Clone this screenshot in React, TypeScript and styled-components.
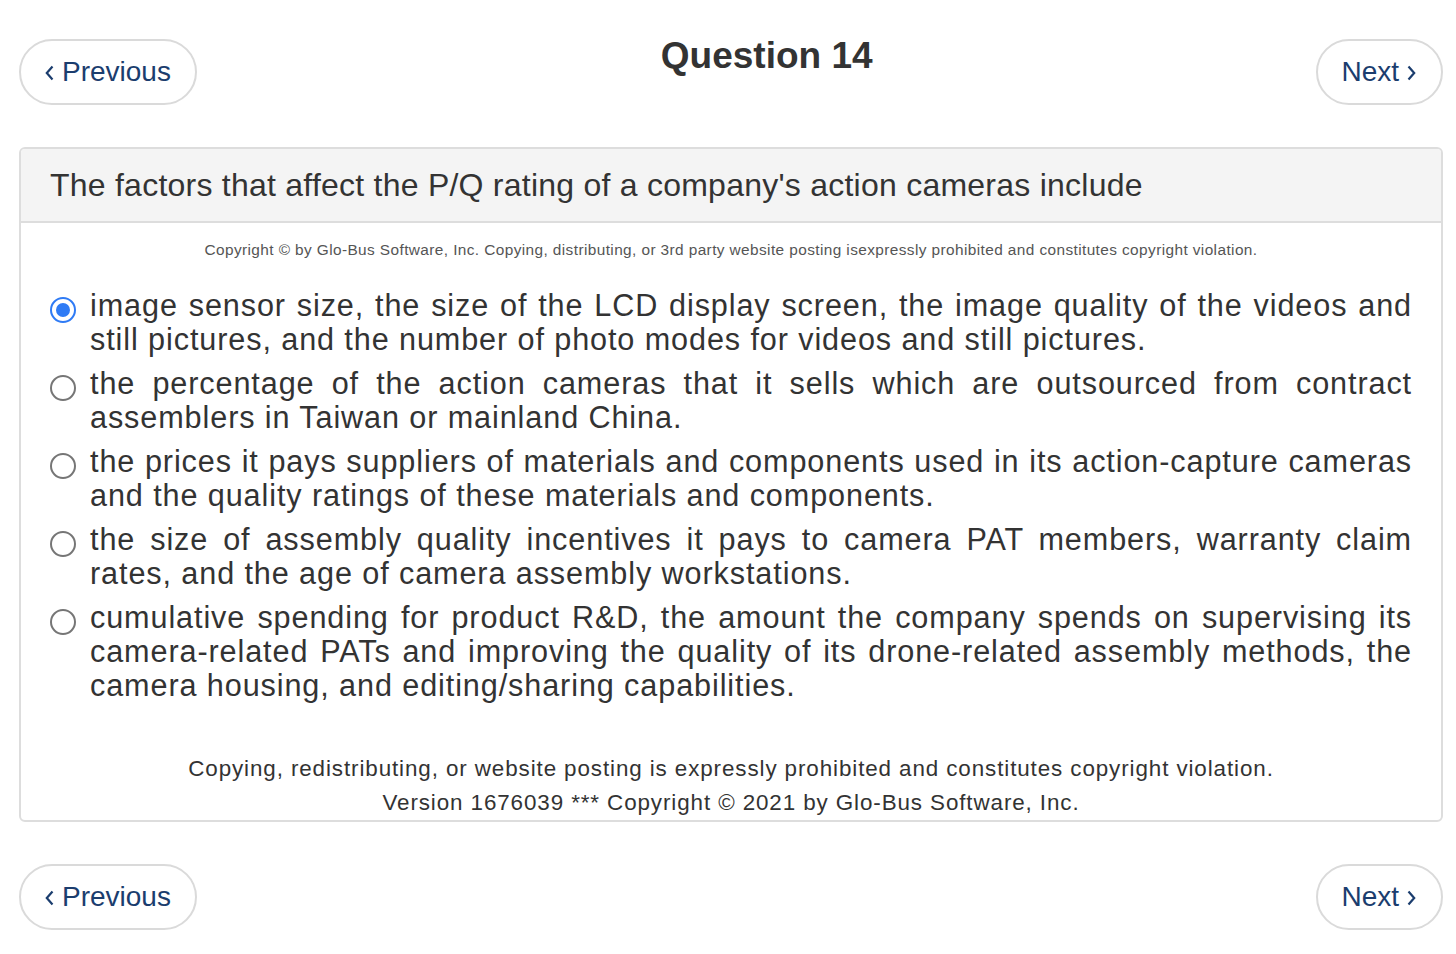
import React, { useState } from "react";
import styled, { createGlobalStyle } from "styled-components";

const GlobalStyle = createGlobalStyle`
  html, body {
    margin: 0;
    padding: 0;
    background: #fff;
    font-family: "Liberation Sans", Arial, Helvetica, sans-serif;
    color: #333;
  }
`;

const Page = styled.div`
  padding: 0 13px 0 19px;
`;

const NavRow = styled.div<{ $top: number }>`
  display: flex;
  justify-content: space-between;
  align-items: flex-start;
  padding-top: ${(p) => p.$top}px;
`;

const NavButton = styled.button<{ $offset: number }>`
  margin-top: ${(p) => p.$offset}px;
  height: 66px;
  padding: 0 24px 0 23px;
  border: 2px solid #dadada;
  border-radius: 33px;
  background: #fff;
  color: #1b3d6e;
  font-family: "Liberation Sans", Arial, Helvetica, sans-serif;
  font-size: 28px;
  display: flex;
  align-items: center;
  gap: 7px;
  cursor: pointer;
  svg {
    width: 11px;
    height: 18px;
    margin-top: 2px;
  }
`;

const Title = styled.h1`
  margin: 2px 0 0 20px;
  font-size: 37px;
  font-weight: bold;
  color: #333;
  line-height: 43px;
`;

const Panel = styled.div`
  margin: 42px 0;
  border: 2px solid #dddddd;
  border-radius: 6px;
  overflow: hidden;
`;

const PanelHeader = styled.div`
  background: #f4f4f4;
  border-bottom: 2px solid #dddddd;
  padding: 0 29px;
  height: 72px;
  display: flex;
  align-items: center;
  font-size: 32px;
  letter-spacing: 0.24px;
  color: #333;
`;

const PanelBody = styled.div`
  padding: 14px 29px 0;
`;

const SmallCopyright = styled.div`
  text-align: center;
  font-size: 15.4px;
  letter-spacing: 0.4px;
  color: #555;
  line-height: 26px;
  margin-bottom: 25px;
`;

const OptionList = styled.div`
  display: flex;
  flex-direction: column;
  gap: 10px;
`;

const OptionRow = styled.label`
  display: flex;
  align-items: flex-start;
  gap: 14px;
  cursor: pointer;
`;

const Radio = styled.span<{ $checked: boolean }>`
  flex: none;
  width: 26px;
  height: 26px;
  margin-top: 9px;
  box-sizing: border-box;
  border-radius: 50%;
  border: 2px solid ${(p) => (p.$checked ? "#2f7bf5" : "#767676")};
  background: #fff;
  display: flex;
  align-items: center;
  justify-content: center;
  &::after {
    content: "";
    width: 14px;
    height: 14px;
    border-radius: 50%;
    background: #2f7bf5;
    display: ${(p) => (p.$checked ? "block" : "none")};
  }
`;

const OptionText = styled.span`
  flex: 1;
  font-size: 30.6px;
  letter-spacing: 0.9px;
  line-height: 34px;
  text-align: justify;
  color: #333;
`;

const Footer = styled.div`
  text-align: center;
  font-size: 22.4px;
  letter-spacing: 0.9px;
  line-height: 34px;
  color: #333;
  margin-top: 50px;
`;

const ChevronLeft = () => (
  <svg viewBox="0 0 11 18" fill="none" stroke="currentColor" strokeWidth="2.2">
    <path d="M8.5 2.5 L2.8 9 L8.5 15.5" />
  </svg>
);

const ChevronRight = () => (
  <svg viewBox="0 0 11 18" fill="none" stroke="currentColor" strokeWidth="2.2">
    <path d="M2.5 2.5 L8.2 9 L2.5 15.5" />
  </svg>
);

const OPTIONS = [
  "image sensor size, the size of the LCD display screen, the image quality of the videos and still pictures, and the number of photo modes for videos and still pictures.",
  "the percentage of the action cameras that it sells which are outsourced from contract assemblers in Taiwan or mainland China.",
  "the prices it pays suppliers of materials and components used in its action-capture cameras and the quality ratings of these materials and components.",
  "the size of assembly quality incentives it pays to camera PAT members, warranty claim rates, and the age of camera assembly workstations.",
  "cumulative spending for product R&D, the amount the company spends on supervising its camera-related PATs and improving the quality of its drone-related assembly methods, the camera housing, and editing/sharing capabilities.",
];

const Nav = (props: { top: number; offset: number; title?: string }) => (
  <NavRow $top={props.top}>
    <NavButton $offset={props.offset}>
      <ChevronLeft />
      Previous
    </NavButton>
    {props.title && <Title>{props.title}</Title>}
    <NavButton $offset={props.offset}>
      Next
      <ChevronRight />
    </NavButton>
  </NavRow>
);

const App = () => {
  const [selected, setSelected] = useState(0);
  return (
    <Page>
      <GlobalStyle />
      <Nav top={32} offset={7} title="Question 14" />
      <Panel>
        <PanelHeader>
          The factors that affect the P/Q rating of a company's action cameras include
        </PanelHeader>
        <PanelBody>
          <SmallCopyright>
            Copyright © by Glo-Bus Software, Inc. Copying, distributing, or 3rd party website
            posting isexpressly prohibited and constitutes copyright violation.
          </SmallCopyright>
          <OptionList>
            {OPTIONS.map((text, i) => (
              <OptionRow key={i} onClick={() => setSelected(i)}>
                <Radio $checked={selected === i} />
                <OptionText>{text}</OptionText>
              </OptionRow>
            ))}
          </OptionList>
          <Footer>
            Copying, redistributing, or website posting is expressly prohibited and constitutes
            copyright violation.
            <br />
            Version 1676039 *** Copyright © 2021 by Glo-Bus Software, Inc.
          </Footer>
        </PanelBody>
      </Panel>
      <Nav top={0} offset={0} />
    </Page>
  );
};

export default App;
